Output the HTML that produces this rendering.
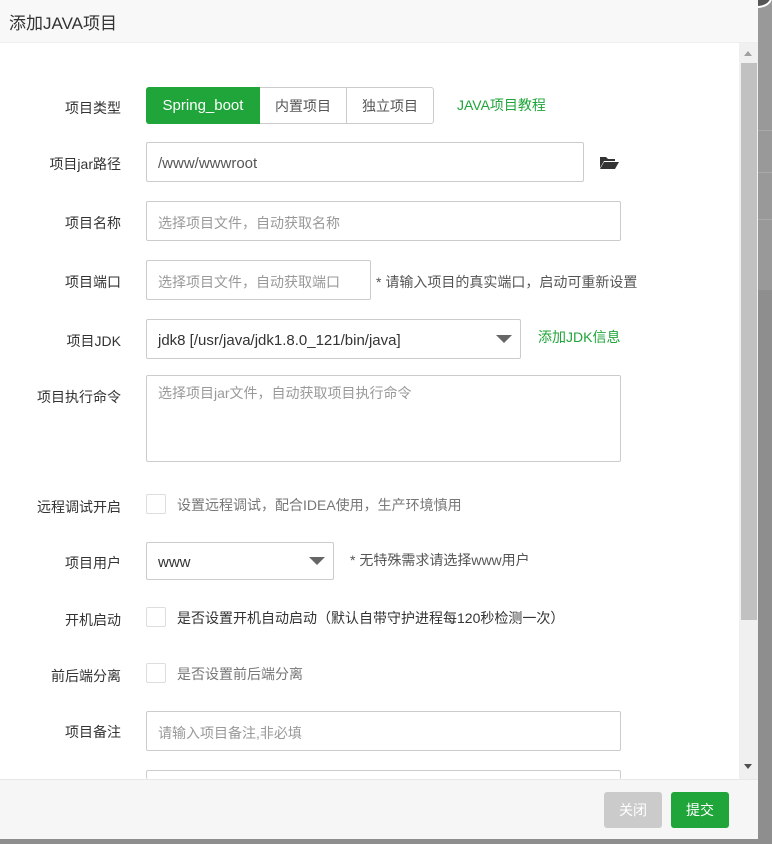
<!DOCTYPE html>
<html><head><meta charset="utf-8"><style>
*{box-sizing:border-box;margin:0;padding:0}
body{width:772px;height:844px;overflow:hidden;background:#8e8e8e;font-family:"Liberation Sans","Noto Sans CJK SC",sans-serif;font-size:14px;color:#555;position:relative}
.dlg{position:absolute;left:0;top:0;width:758px;height:839px;background:#fff}
.hd{height:43px;background:#f8f8f8;border-bottom:1px solid #eee;font-size:17px;color:#333;padding:9px 0 0 9px}
.ft{position:absolute;left:0;top:779px;width:758px;height:60px;background:#f5f6f5;border-top:1px solid #e8e8e8}
.btn{position:absolute;top:12px;width:58px;height:36px;border-radius:3px;color:#fff;font-size:14px;text-align:center;line-height:36px}
.lbl{position:absolute;right:637px;font-size:14px;color:#333;white-space:nowrap}
.inp{position:absolute;left:146px;height:40px;border:1px solid #ccc;border-radius:2px;padding:2px 11px 0;line-height:38px;font-size:14px;color:#999;white-space:nowrap}
.v{color:#555;font-size:15px}
.cb{position:absolute;left:146px;width:20px;height:20px;border:1px solid #ddd;border-radius:2px}
.t{position:absolute;white-space:nowrap;font-size:14px;color:#555}
.g{color:#20a53a}
.arr{position:absolute;right:8px;top:15px;width:0;height:0;border-left:8px solid transparent;border-right:8px solid transparent;border-top:8px solid #666}
.sb{position:absolute;left:739px;top:43px;width:19px;height:736px;background:#f0f0f0}
.th{position:absolute;left:2px;top:20px;width:16px;height:557px;background:#c1c1c1}
</style></head><body>
<div style="position:absolute;left:758px;top:0;width:14px;height:290px;background:#999"></div>
<div style="position:absolute;left:758px;top:130px;width:14px;height:1px;background:#aaa"></div>
<div style="position:absolute;left:758px;top:172px;width:14px;height:1px;background:#aaa"></div>
<div style="position:absolute;left:758px;top:219px;width:14px;height:1px;background:#aaa"></div>
<div style="position:absolute;left:742px;top:-12px;width:30px;height:20px;border-radius:50%;background:#555;border:2px solid #fff"></div>
<div class="dlg">
<div class="hd">添加JAVA项目</div>
<div class="sb"><div style="position:absolute;left:5px;top:8px;border-left:4px solid transparent;border-right:4px solid transparent;border-bottom:5px solid #a0a0a0"></div><div class="th"></div><div style="position:absolute;left:5px;top:721px;border-left:4px solid transparent;border-right:4px solid transparent;border-top:5px solid #505050"></div></div>

<div class="lbl" style="top:98px">项目类型</div>
<div style="position:absolute;left:146px;top:87px;height:37px;width:288px;border:1px solid #ccc;border-radius:3px;display:flex;font-size:15px">
<div style="width:114px;background:#20a53a;color:#fff;text-align:center;line-height:37px;margin:-1px 0 -1px -1px;border-radius:3px 0 0 3px;height:37px">Spring_boot</div>
<div style="width:87px;text-align:center;line-height:37px;border-right:1px solid #ccc;color:#555;font-size:14px">内置项目</div>
<div style="flex:1;text-align:center;line-height:37px;color:#555;font-size:14px">独立项目</div></div>
<div class="t g" style="left:457px;top:95px">JAVA项目教程</div>

<div class="lbl" style="top:154px">项目jar路径</div>
<div class="inp v" style="top:142px;width:438px">/www/wwwroot</div>
<svg style="position:absolute;left:599px;top:155px" width="20" height="14" viewBox="0 0 20 14"><path d="M1 2h6l2 2h7v2H5L1 13z" fill="#333"/><path d="M5 7h15l-4 7H1z" fill="#333"/></svg>

<div class="lbl" style="top:213px">项目名称</div>
<div class="inp" style="top:201px;width:475px">选择项目文件，自动获取名称</div>

<div class="lbl" style="top:272px">项目端口</div>
<div class="inp" style="top:260px;width:225px">选择项目文件，自动获取端口</div>
<div class="t" style="left:376px;top:272px">* 请输入项目的真实端口，启动可重新设置</div>

<div class="lbl" style="top:331px">项目JDK</div>
<div class="inp v" style="top:319px;width:375px;color:#333">jdk8 [/usr/java/jdk1.8.0_121/bin/java]<div class="arr"></div></div>
<div class="t g" style="left:538px;top:327px">添加JDK信息</div>

<div class="lbl" style="top:387px">项目执行命令</div>
<div class="inp" style="top:375px;width:475px;height:87px;line-height:30px">选择项目jar文件，自动获取项目执行命令</div>

<div class="lbl" style="top:497px">远程调试开启</div>
<div class="cb" style="top:494px"></div>
<div class="t" style="left:177px;top:495px;color:#777">设置远程调试，配合IDEA使用，生产环境慎用</div>

<div class="lbl" style="top:553px">项目用户</div>
<div class="inp v" style="top:542px;width:188px;height:38px;line-height:36px;color:#333">www<div class="arr" style="top:14px"></div></div>
<div class="t" style="left:350px;top:550px">* 无特殊需求请选择www用户</div>

<div class="lbl" style="top:610px">开机启动</div>
<div class="cb" style="top:607px"></div>
<div class="t" style="left:177px;top:608px;color:#333">是否设置开机自动启动（默认自带守护进程每120秒检测一次）</div>

<div class="lbl" style="top:666px">前后端分离</div>
<div class="cb" style="top:663px"></div>
<div class="t" style="left:177px;top:664px;color:#777">是否设置前后端分离</div>

<div class="lbl" style="top:722px">项目备注</div>
<div class="inp" style="top:711px;width:475px">请输入项目备注,非必填</div>
<div class="inp" style="top:770px;width:475px;height:9px;border-bottom:none"></div>

<div class="ft">
<div class="btn" style="left:604px;background:#cbcbcb">关闭</div>
<div class="btn" style="left:671px;background:#20a53a">提交</div>
</div>
</div>
</body></html>
